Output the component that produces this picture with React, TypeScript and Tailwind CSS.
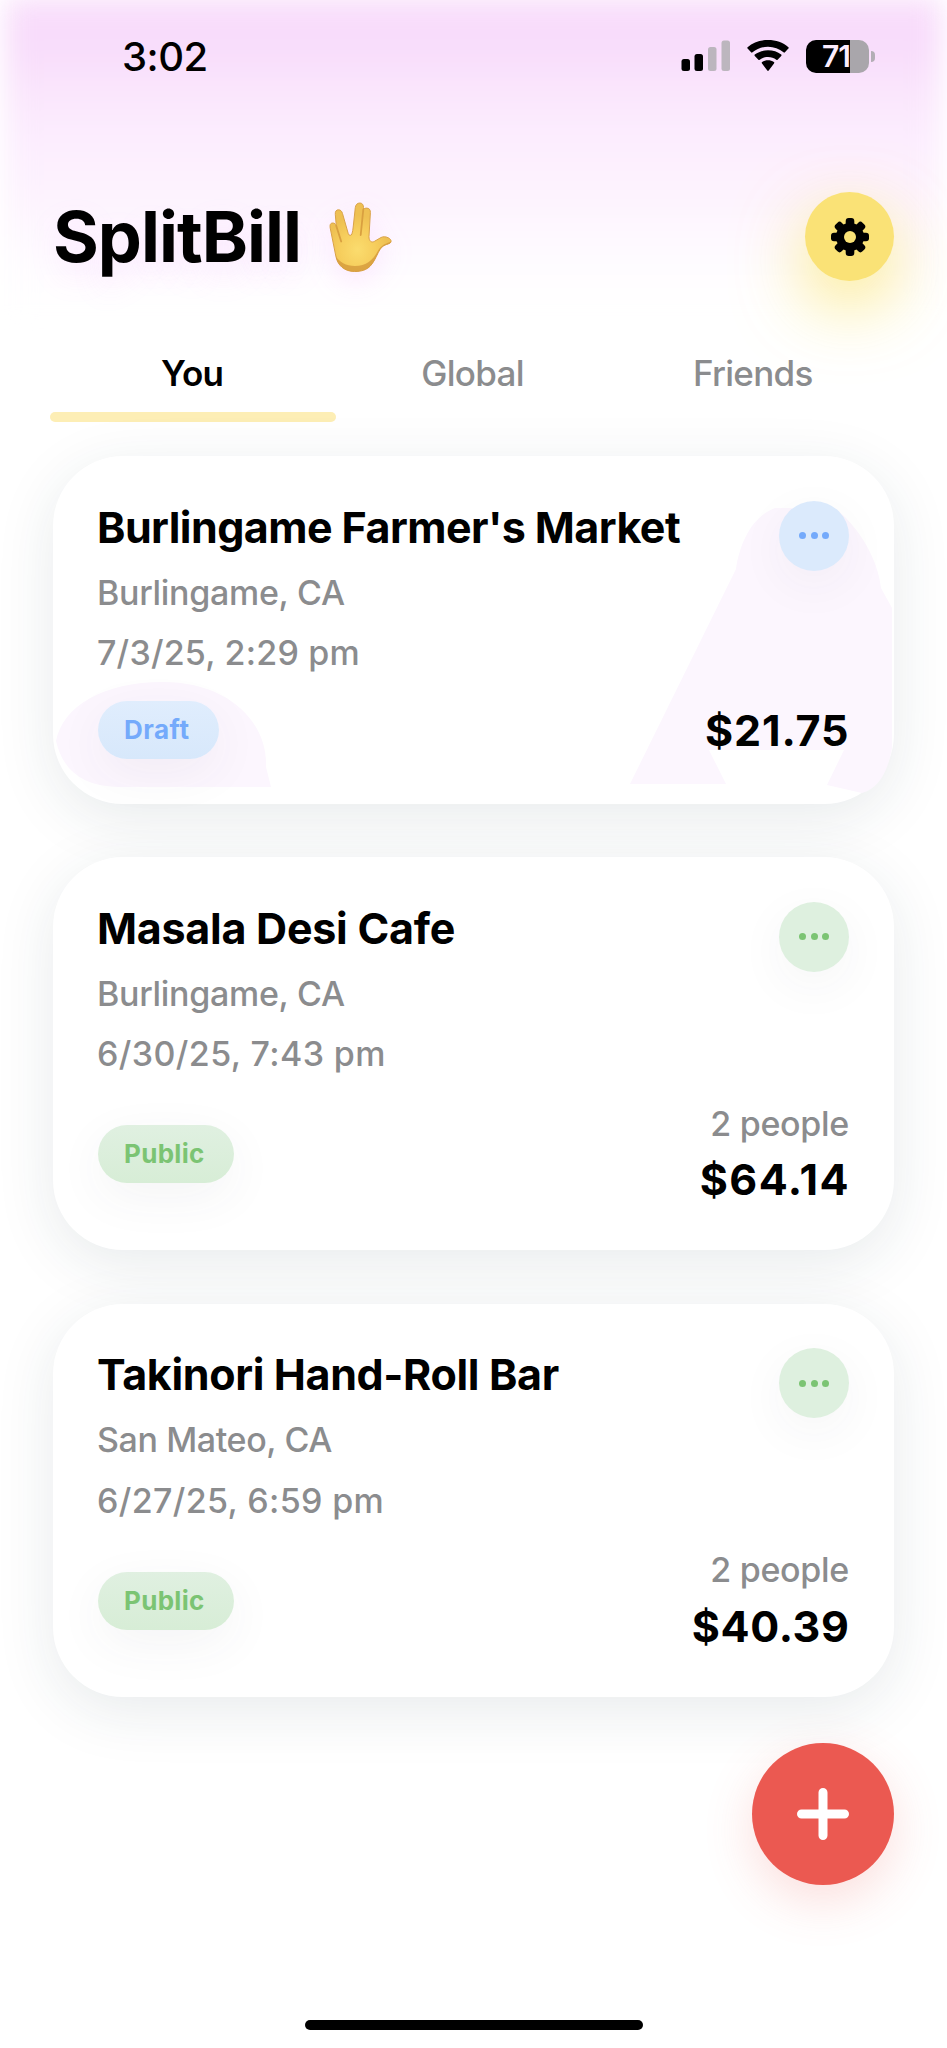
import React from "react";
import clsx from "clsx";

type Bill = {
  name: string;
  place: string;
  date: string;
  status: "Draft" | "Public";
  people?: string;
  total: string;
  titleClass: string;
  placeClass: string;
  dateClass: string;
  totalClass: string;
};

const bills: Bill[] = [
  {
    name: "Burlingame Farmer's Market",
    place: "Burlingame, CA",
    date: "7/3/25, 2:29 pm",
    status: "Draft",
    total: "$21.75",
    titleClass: "tracking-[-0.550px]",
    placeClass: "tracking-[-0.3px]",
    dateClass: "tracking-[0.2px]",
    totalClass: "tracking-[0.9px] -mr-[0.5px]",
  },
  {
    name: "Masala Desi Cafe",
    place: "Burlingame, CA",
    date: "6/30/25, 7:43 pm",
    status: "Public",
    people: "2 people",
    total: "$64.14",
    titleClass: "tracking-[-0.250px]",
    placeClass: "tracking-[-0.3px]",
    dateClass: "tracking-[0.4px]",
    totalClass: "tracking-[1.4px] -mr-[1px]",
  },
  {
    name: "Takinori Hand-Roll Bar",
    place: "San Mateo, CA",
    date: "6/27/25, 6:59 pm",
    status: "Public",
    people: "2 people",
    total: "$40.39",
    titleClass: "tracking-[-0.350px]",
    placeClass: "tracking-[-0.4px]",
    dateClass: "tracking-[0.350px]",
    totalClass: "tracking-[0.6px] -mr-[0.5px]",
  },
];

const StatusBar: React.FC = () => (
  <div className="flex items-start justify-between h-[192px] pl-[122px] pr-[72px] pt-[32px]">
    <span className="text-[40px] leading-[49px] font-medium tracking-[-0.5px]">3:02</span>
    <div className="flex items-center pt-[7px]">
      <svg width="50" height="34" viewBox="0 0 50 34" className="mr-[16px]">
        <rect x="0.5" y="20" width="8.5" height="12" rx="2.5" fill="#000" />
        <rect x="13.5" y="15" width="8.5" height="17" rx="2.5" fill="#000" />
        <rect x="27" y="8" width="8.5" height="24" rx="2.5" fill="#bcb6be" />
        <rect x="40.5" y="1.5" width="8.5" height="30.5" rx="2.5" fill="#bcb6be" />
      </svg>
      <svg width="42" height="34" viewBox="0 0 42 34" className="mr-[17px]" fill="#000">
        <path d="M0.6 9.6a1 1 0 0 1 0-1.4C6 3.500 13 1 21 1s15 2.500 20.400 7.200a1 1 0 0 1 0 1.400L37.900 13.300a1 1 0 0 1-1.400 0C32.300 9.800 27 7.700 21 7.700S9.700 9.800 5.500 13.300a1 1 0 0 1-1.400 0z" />
        <path d="M7.800 17a1 1 0 0 1 0-1.400C11.300 12.800 16 11.300 21 11.300s9.700 1.500 13.200 4.300a1 1 0 0 1 0 1.400l-3.600 3.700a1 1 0 0 1-1.300.1C27 18.900 24.200 18 21 18s-6 .9-8.300 2.800a1 1 0 0 1-1.300-.1z" />
        <path d="M15 24.400a1 1 0 0 1 .1-1.400c1.700-1.100 3.700-1.700 5.900-1.700s4.200.6 5.900 1.700a1 1 0 0 1 .1 1.400L21.700 31.600a1 1 0 0 1-1.400 0z" />
      </svg>
      <div className="flex items-center">
        <div className="flex items-center justify-center w-[63px] h-[33px] rounded-[10px] bg-[linear-gradient(90deg,#000_0_44.500px,#a9a6ab_44.500px)]">
          <span className="text-[30px] leading-[33px] font-semibold text-[#fbecfd] tracking-[-1px] -ml-[3px]">71</span>
        </div>
        <div className="w-[4px] h-[11px] ml-[2px] rounded-r-full bg-[#b3aeb5]" />
      </div>
    </div>
  </div>
);

const VulcanSalute: React.FC = () => (
  <svg width="64" height="72" viewBox="0 0 64 72">
    <defs>
      <radialGradient id="palm" cx="0.45" cy="0.68" r="0.5">
        <stop offset="0" stopColor="#fbdc6e" />
        <stop offset="0.6" stopColor="#f6cd5c" />
        <stop offset="1" stopColor="#eec053" />
      </radialGradient>
    </defs>
    <g strokeLinejoin="round">
      <path
        d="M1.200 26C.5 22 2 21 3.800 21s3 1 3.500 3L6.300 12.500C6 9 7.500 7.800 9.500 7.800s3.300 1.200 4 3.700l5.800 20.300c.6 2 2.900 2.100 3.600.2.800-2.200 1-4.500 1.300-7L26.300 5.500C26.700 2.500 28.500 1 30.800 1s3.700 1.500 3.700 4.500V7c.8-.6 1.800-.9 3-.9 2.500 0 4 1.500 3.900 4.400l-1.400 24c-.2 4.500 2.500 6.600 5.500 4.800L52 35.500c2.300-1.200 5-.9 7.300.3 2 1 3 2.500 2.800 3.600-.3 1.800-2 2.300-4.300 3-4.500 1.400-6.300 3.800-8.500 8.100-2.500 5-4.500 9.800-8 13.500C37.500 68 32.500 69.500 25.500 69.500 15.500 69.500 8.500 63.500 6.800 54z"
        fill="url(#palm)"
        stroke="#d9a24a"
        strokeWidth="1"
      />
      <path
        d="M6.800 54C8.500 63.500 15.500 69.500 25.500 69.500c7 0 12-1.500 15.800-5.500 3.500-3.700 5.500-8.500 8-13.500 2.200-4.300 4-6.700 8.500-8.100 2.300-.7 4-1.200 4.300-3-5 2-9.500 3-13.200 9.500C44 58 37 64 26 64 17 64 10 60 6.800 54z"
        fill="#d49a3c"
        opacity="0.8"
      />
      <path d="M7.300 24l4.900 15.500M34.300 7.500L31.700 33" stroke="#d9a040" strokeWidth="1.8" strokeLinecap="round" fill="none" />
    </g>
  </svg>
);

const Gear: React.FC = () => (
  <svg width="40" height="40" viewBox="-20 -20 40 40">
    {[0, 45, 90, 135].map((a) => (
      <rect key={a} x="-4.300" y="-19" width="8.600" height="38" rx="3" transform={`rotate(${a})`} />
    ))}
    <circle r="14" />
    <circle r="6" fill="#fae276" />
  </svg>
);

const Header: React.FC = () => (
  <header className="flex items-start justify-between pl-[53px] pr-[53px] h-[143px]">
    <h1 className="flex items-start text-[70px] leading-[84px] font-bold tracking-[-1px] mt-[3px]">
      <span className="w-[276px] [text-shadow:0_14px_30px_rgba(232,121,249,0.150)]">SplitBill</span>
      <span className="mt-[7px] [filter:drop-shadow(0_10px_14px_rgba(232,121,249,0.150))]">
        <VulcanSalute />
      </span>
    </h1>
    <button className="flex items-center justify-center w-[89px] h-[89px] rounded-full bg-[#fae276] shadow-[0_24px_70px_rgba(250,226,90,0.750)]">
      <Gear />
    </button>
  </header>
);

const Tabs: React.FC = () => (
  <nav className="grid grid-cols-3 ml-[52px] mr-[54px] h-[87px] text-[35px] leading-[77px] text-center tracking-[-0.7px]">
    <div className="flex flex-col items-center">
      <span className="h-[77px] font-semibold text-black">You</span>
      <div className="w-[286px] h-[10px] ml-[1px] rounded-full bg-[#fdeeb5]" />
    </div>
    <span className="font-medium text-[#8b8c8e]">Global</span>
    <span className="font-medium text-[#8b8c8e]">Friends</span>
  </nav>
);

const BillCard: React.FC<{ bill: Bill }> = ({ bill }) => {
  const draft = bill.status === "Draft";
  return (
    <article className="relative rounded-[70px] bg-white px-[45px] pt-[44.500px] pb-[45px] shadow-[0_14px_60px_rgba(30,60,70,0.100)]">
      {draft && (
        <svg className="absolute inset-0" width="840" height="347" viewBox="0 0 840 347" fill="#fcf6fe">
          <path d="M577 328L683 113C687 85 700 60 722 52h60c25 20 43 52 46 80l11 20v140c-4 22-12 40-30 45l-35-8 17-35H656l17 34z" />
          <path d="M3 285C10 250 50 226 110 226c65 0 105 40 103 85l5 20H64C30 330 10 315 3 285z" />
        </svg>
      )}
      <div className="relative flex items-start justify-between h-[184px]">
        <div className="flex flex-col -ml-[1px]">
          <h2 className={clsx("text-[43px] leading-[52px] font-bold whitespace-nowrap mb-[10px]", bill.titleClass)}>
            {bill.name}
          </h2>
          <p className={clsx("text-[34px] leading-[60.500px] font-medium text-[#8b8c8e]", bill.placeClass)}>{bill.place}</p>
          <p className={clsx("text-[34px] leading-[60.500px] font-medium text-[#8b8c8e]", bill.dateClass)}>{bill.date}</p>
        </div>
        <button
          className={clsx(
            "flex items-center justify-center gap-[4.500px] w-[70px] h-[70px] shrink-0 rounded-full shadow-[0_14px_50px_rgba(60,60,80,0.050)]",
            draft ? "bg-[#dbeafc] text-[#74aafb]" : "bg-[#def0df] text-[#7bc473]"
          )}
        >
          <span className="w-[7px] h-[7px] rounded-full bg-current" />
          <span className="w-[7px] h-[7px] rounded-full bg-current" />
          <span className="w-[7px] h-[7px] rounded-full bg-current" />
        </button>
      </div>
      <div className="relative flex items-center justify-between mt-[16px]">
        <span
          className={clsx(
            "h-[58px] rounded-full px-[26px] text-[26px] leading-[58px] font-bold shadow-[0_14px_50px_rgba(60,60,80,0.060)]",
            draft
              ? "w-[121px] tracking-[0.5px] bg-linear-to-b from-[#e0edfd] to-[#d7e8fb] text-[#74aafb]"
              : "w-[136px] mt-[2px] tracking-[0.3px] bg-linear-to-b from-[#e0f0e1] to-[#d7edd6] text-[#7bc473]"
          )}
        >
          {bill.status}
        </span>
        <div className="flex flex-col items-end">
          {bill.people && (
            <span className="text-[34px] leading-[43px] font-medium tracking-[-0.3px] text-[#8b8c8e] mb-[8.500px]">
              {bill.people}
            </span>
          )}
          <span className={clsx("text-[43px] leading-[52px] font-bold", bill.totalClass)}>{bill.total}</span>
        </div>
      </div>
    </article>
  );
};

const App: React.FC = () => {
  return (
    <div className="relative flex flex-col w-[947px] h-[2048px] overflow-hidden bg-white text-black font-[Inter,'Liberation_Sans',sans-serif]">
      <div className="absolute left-[6px] right-[6px] -top-[2px] h-[340px] blur-[14px] bg-[linear-gradient(180deg,#f8dcfb_0px,#f8dcfb_50px,#fae6fc_95px,#fcedfe_140px,#fdf3fe_200px,#fefbff_260px,#ffffff_310px)]" />
      <div className="relative flex flex-col h-full">
        <StatusBar />
        <Header />
        <Tabs />
        <main className="flex flex-col gap-[53.500px] mx-[53px] mt-[34px]">
          {bills.map((bill) => (
            <BillCard key={bill.name} bill={bill} />
          ))}
        </main>
        <button className="relative flex items-center justify-center self-end w-[142px] h-[142px] mt-[46px] mr-[53px] rounded-full bg-[#eb5951] shadow-[0_16px_50px_rgba(235,89,81,0.200)]">
          <svg width="52" height="52" viewBox="0 0 52 52" stroke="#fff" strokeWidth="9" strokeLinecap="round">
            <path d="M26 4.500v43M4.500 26h43" />
          </svg>
        </button>
        <div className="w-[338px] h-[10px] mt-auto mb-[18px] self-center rounded-full bg-black" />
      </div>
    </div>
  );
};

export default App;
